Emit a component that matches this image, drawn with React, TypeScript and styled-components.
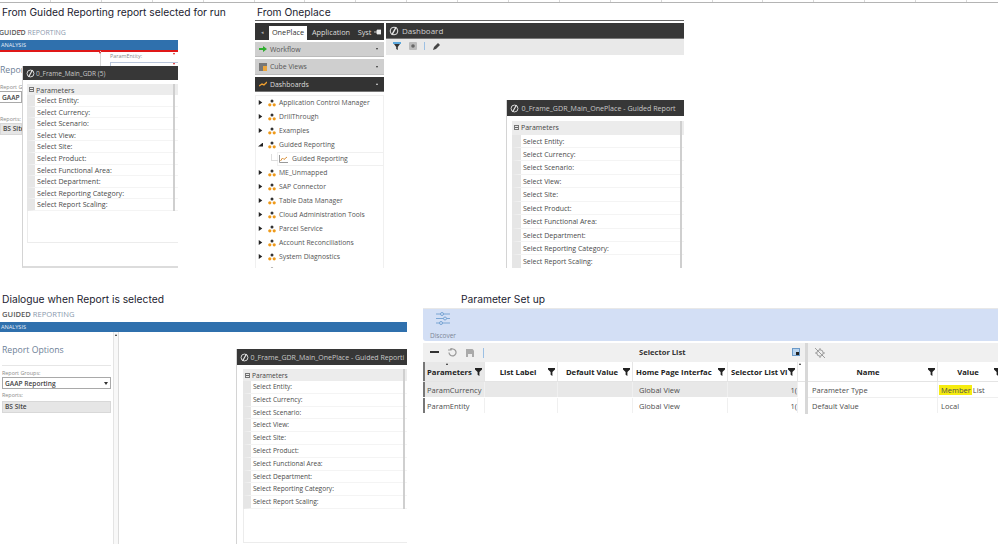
import styled, { createGlobalStyle } from 'styled-components';

const GlobalStyle = createGlobalStyle`
  html, body {
    margin: 0;
    padding: 0;
    background: #fff;
    overflow: hidden;
  }
  * { box-sizing: border-box; }
`;

const uiFont = `"Open Sans", "Noto Sans", "Liberation Sans", sans-serif`;

const Sheet = styled.div`
  position: relative;
  width: 998px;
  height: 544px;
  overflow: hidden;
  background: #fff;
  font-family: ${uiFont};
`;

const ColumnRuler = styled.div`
  display: flex;
  height: 3px;
  border-bottom: 1px solid #b4b4b4;
  padding-left: 50px;
`;

const ColumnTick = styled.div`
  width: 50.9px;
  flex: none;
  border-left: 1px solid #d8d8d8;
`;

// pasted pictures sit freely on the spreadsheet
const Pasted = styled.div<{ $x: number; $y: number; $w: number; $h: number }>`
  position: absolute;
  left: ${p => p.$x}px;
  top: ${p => p.$y}px;
  width: ${p => p.$w}px;
  height: ${p => p.$h}px;
  overflow: hidden;
`;

const Caption = styled.div<{ $x: number; $y: number }>`
  position: absolute;
  left: ${p => p.$x}px;
  top: ${p => p.$y}px;
  font-family: Inter, "Open Sans", sans-serif;
  font-size: 10.25px;
  line-height: 14px;
  color: #1c2230;
  white-space: nowrap;
`;

const Brand = styled.div<{ $h: number; $lh: number; $size: number; $x: number }>`
  height: ${p => p.$h}px;
  font-size: ${p => p.$size}px;
  line-height: ${p => p.$lh}px;
  font-weight: 600;
  color: #5a5a5a;
  white-space: nowrap;
  margin-left: ${p => p.$x}px;
  span { font-weight: 400; color: #8a99ad; margin-left: 2px; }
`;

const AnalysisBar = styled.div<{ $red?: boolean }>`
  height: ${p => (p.$red ? 12 : 10)}px;
  background: #2f70ad;
  border-bottom: ${p => (p.$red ? '2px solid #e01818' : '0')};
  color: #e6eef7;
  font-size: 5.6px;
  line-height: 10px;
  padding-left: 1px;
`;

const WindowBox = styled.div<{ $x: number; $y: number; $w: number; $h: number; $closed?: boolean }>`
  position: absolute;
  left: ${p => p.$x}px;
  top: ${p => p.$y}px;
  width: ${p => p.$w}px;
  height: ${p => p.$h}px;
  background: #fff;
  border-left: 1px solid #d4d4d4;
  border-bottom: ${p => (p.$closed ? '2px solid #dcdcdc' : '0')};
  overflow: hidden;
  display: flex;
  flex-direction: column;
`;

const WindowTitle = styled.div<{ $h: number; $size: number; $gap: number }>`
  height: ${p => p.$h}px;
  flex: none;
  background: #373737;
  color: #c8c8c8;
  display: flex;
  align-items: center;
  gap: ${p => p.$gap}px;
  padding-left: 2.5px;
  font-size: ${p => p.$size}px;
  white-space: nowrap;
`;

const GridArea = styled.div<{ $inset: number; $top: number; $h: number }>`
  margin: ${p => p.$top}px 0 0 ${p => p.$inset}px;
  height: ${p => p.$h}px;
  flex: none;
  position: relative;
  box-shadow: inset 1px -1px 0 #ececec;
`;

const GridHeader = styled.div<{ $h: number; $size: number }>`
  height: ${p => p.$h}px;
  background: #ececec;
  display: flex;
  align-items: center;
  gap: 2px;
  padding-left: 2px;
  font-size: ${p => p.$size}px;
  color: #444;
`;

const Expander = styled.span`
  width: 5px;
  height: 5px;
  border: 1px solid #777;
  background: linear-gradient(#666, #666) center / 3px 1px no-repeat;
  flex: none;
`;

const GridRow = styled.div<{ $h: number; $gutter: number; $size: number }>`
  height: ${p => p.$h}px;
  border-left: ${p => p.$gutter}px solid #e6e6e6;
  border-bottom: 1px solid #f4f4f4;
  background: #fff;
  padding-left: 2px;
  font-size: ${p => p.$size}px;
  line-height: ${p => p.$h}px;
  color: #4a4a4a;
  white-space: nowrap;
`;

const GridScroll = styled.div<{ $right: number; $h: number }>`
  position: absolute;
  top: 0;
  right: ${p => p.$right}px;
  width: 2px;
  height: ${p => p.$h}px;
  background: #cfcfcf;
`;

const LeftHeading = styled.div`
  font-size: 8.7px;
  line-height: 14px;
  color: #6e7f97;
  white-space: nowrap;
`;

const TinyLabel = styled.div`
  font-size: 5.4px;
  line-height: 8px;
  color: #8a8a8a;
  white-space: nowrap;
`;

const SelectBox = styled.div`
  height: 12px;
  flex: none;
  border: 1px solid #a9a9a9;
  display: flex;
  align-items: center;
  justify-content: space-between;
  padding: 0 2px;
  font-size: 6.6px;
  font-weight: 600;
  color: #444;
  white-space: nowrap;
  &::after { content: ''; border: 2px solid transparent; border-top: 3px solid #333; border-bottom: 0; }
`;

const ListItem = styled.div`
  height: 12px;
  flex: none;
  background: #e6e6e6;
  border: 1px solid #d8d8d8;
  font-size: 6.6px;
  font-weight: 600;
  line-height: 10px;
  padding-left: 2px;
  color: #444;
  white-space: nowrap;
`;

const OptionsLayout = styled.div`
  display: flex;
  height: 212px;
`;

const OptionsPanel = styled.div`
  width: 113px;
  flex: none;
  padding: 11px 2px 0 2px;
  display: flex;
  flex-direction: column;
`;

const OptionsGutter = styled.div`
  width: 6px;
  flex: none;
  border-left: 1px solid #e4e4e4;
  border-right: 1px solid #dcdcdc;
  background: #f8f8f8;
  position: relative;
  &::before {
    content: '';
    position: absolute;
    top: 2px;
    left: 1px;
    border: 1.5px solid transparent;
    border-bottom: 2px solid #222;
    border-top: 0;
  }
`;

const OptionsRule = styled.div`
  height: 1px;
  background: #e6e6e6;
  margin: 8px 0 3px;
`;

const OptionsSpacer = styled.div<{ $h: number }>`
  height: ${p => p.$h}px;
  flex: none;
`;

const RedTick = styled.span<{ $x: number; $y: number }>`
  position: absolute;
  left: ${p => p.$x}px;
  top: ${p => p.$y}px;
  border: 1.5px solid transparent;
  border-top: 2px solid #d81818;
  border-bottom: 0;
`;

const BehindInput = styled.div`
  position: absolute;
  left: 110px;
  top: 37px;
  width: 70px;
  height: 6px;
  border: 1px solid #b9c6dc;
`;

const BehindLabel = styled(TinyLabel)`
  position: absolute;
  left: 110px;
  top: 27px;
`;

const BehindRule = styled.div`
  position: absolute;
  left: 100px;
  top: 26px;
  width: 1px;
  height: 16px;
  background: #d8d8d8;
`;

const OverlapColumn = styled.div`
  position: absolute;
  left: 0;
  top: 38px;
  width: 22px;
  height: 80px;
  overflow: hidden;
  display: flex;
  flex-direction: column;
`;

const ClippedSelect = styled(SelectBox)`
  &::after { display: none; }
  margin-left: -1px;
  padding-left: 2px;
  overflow: hidden;
  justify-content: flex-start;
`;

const NavShell = styled.div`
  display: flex;
  gap: 2px;
  height: 245px;
`;

const NavColumn = styled.div`
  width: 129px;
  flex: none;
  display: flex;
  flex-direction: column;
  overflow: hidden;
`;

const TabBar = styled.div`
  height: 16.5px;
  background: #333;
  display: flex;
  align-items: flex-end;
  flex: none;
  font-size: 7.3px;
  color: #e0e0e0;
  white-space: nowrap;
  overflow: hidden;
`;

const TabBack = styled.div`
  width: 14px;
  height: 16px;
  flex: none;
  color: #aaa;
  font-size: 5px;
  line-height: 16px;
  text-align: center;
`;

const TabItem = styled.div<{ $active?: boolean; $w: number }>`
  width: ${p => p.$w}px;
  height: 14px;
  line-height: 13px;
  text-align: center;
  flex: none;
  background: ${p => (p.$active ? '#fff' : 'transparent')};
  color: ${p => (p.$active ? '#333' : '#dcdcdc')};
  overflow: hidden;
`;

const Accordion = styled.div<{ $dark?: boolean }>`
  height: 15.5px;
  margin-top: 2px;
  flex: none;
  background: ${p => (p.$dark ? '#333' : '#cfcfcf')};
  border-bottom: 1px solid ${p => (p.$dark ? '#777' : '#bbb')};
  color: ${p => (p.$dark ? '#ddd' : '#555')};
  display: flex;
  align-items: center;
  padding: 1px 6px 0 4px;
  font-size: 6.9px;
  gap: 3px;
`;

const AccordionLabel = styled.span`
  flex: 1;
`;

const Caret = styled.span<{ $up?: boolean; $light?: boolean }>`
  border: 1.5px solid transparent;
  ${p => {
    const c = p.$light ? '#ddd' : '#333';
    return p.$up ? `border-bottom: 2px solid ${c}; border-top: 0;` : `border-top: 2px solid ${c}; border-bottom: 0;`;
  }}
`;

const TreeBox = styled.div`
  flex: 1;
  margin-top: 2.5px;
  border: 1px solid #f0f0f0;
  border-bottom: 0;
  padding-left: 2px;
  overflow: hidden;
`;

const TreeRow = styled.div`
  height: 14px;
  display: flex;
  align-items: center;
  gap: 3px;
  font-size: 6.8px;
  color: #555;
  white-space: nowrap;
`;

const TreeChild = styled(TreeRow)`
  position: relative;
  margin-left: 19px;
  padding-left: 1px;
  gap: 4px;
  border: 1px solid #f0f0f0;
  border-right: 0;
  &::before {
    content: '';
    position: absolute;
    left: -7px;
    top: 1px;
    width: 6px;
    height: 6px;
    border-left: 1px solid #ddd;
    border-bottom: 1px solid #ddd;
  }
`;

const Arrow = styled.span<{ $open?: boolean }>`
  width: 5px;
  flex: none;
  margin-right: 2px;
  ${p =>
    p.$open
      ? `height: 4px; background: #222; clip-path: polygon(100% 0, 100% 100%, 0 100%);`
      : `height: 5px; background: #222; clip-path: polygon(15% 0, 85% 50%, 15% 100%);`}
`;

const DashColumn = styled.div`
  flex: 1;
  display: flex;
  flex-direction: column;
`;

const DashTitle = styled.div`
  height: 16px;
  background: #373737;
  border-bottom: 1px solid #777;
  color: #cfcfcf;
  font-size: 8px;
  display: flex;
  align-items: center;
  gap: 3px;
  padding-left: 3px;
`;

const DashTools = styled.div`
  height: 16px;
  background: #e9e9e9;
  display: flex;
  align-items: center;
  gap: 7.5px;
  padding: 0 0 2px 7px;
`;

const ToolDivider = styled.span<{ $h: number }>`
  width: 1px;
  height: ${p => p.$h}px;
  background: #9cc0e4;
`;

const TopRule = styled.div`
  height: 1px;
  background: #666;
  margin-bottom: 2px;
`;

const Ribbon = styled.div`
  height: 33px;
  background: #d3dff5;
  border-top: 1px solid #e8e8e8;
  border-bottom-left-radius: 3px;
  display: flex;
  padding: 3px 0 0 7px;
`;

const RibbonButton = styled.div`
  width: 26px;
  display: flex;
  flex-direction: column;
  align-items: center;
  gap: 7px;
  font-size: 6.5px;
  line-height: 8px;
  color: #7d8696;
`;

const Splitter = styled.div`
  display: flex;
  height: 71px;
  margin-top: 2px;
`;

const GridPane = styled.div`
  width: 382px;
  flex: none;
  display: flex;
  flex-direction: column;
`;

const SplitBar = styled.div`
  width: 3px;
  flex: none;
  background: #d8d8d8;
`;

const DetailPane = styled.div`
  flex: 1;
  min-width: 0;
  display: flex;
  flex-direction: column;
`;

const PaneTools = styled.div<{ $gap: number }>`
  height: 19px;
  flex: none;
  background: #f0f0f0;
  display: flex;
  align-items: center;
  padding: 0 4px 0 7px;
  gap: ${p => p.$gap}px;
  position: relative;
`;

const PaneTitle = styled.div`
  position: absolute;
  left: 216px;
  top: 0;
  font-size: 7.6px;
  line-height: 19px;
  font-weight: 700;
  color: #333;
`;

const PopOut = styled.span`
  position: absolute;
  right: 5px;
  top: 5px;
  width: 8px;
  height: 8px;
  background: #b8d3ee;
  border: 1px solid #6b9ac8;
  &::after {
    content: '';
    position: absolute;
    right: 0;
    bottom: 0;
    width: 3px;
    height: 3px;
    background: #222;
  }
`;

const TableRow = styled.div<{ $shade?: boolean; $header?: boolean; $lined?: boolean }>`
  display: flex;
  height: ${p => (p.$header ? 20 : 16)}px;
  flex: none;
  position: relative;
  background: ${p => (p.$shade ? 'linear-gradient(#e8e8e8, #e8e8e8) 0 0 / 375px 100% no-repeat' : '#fff')};
  border-bottom: 1px solid ${p => (p.$header ? '#e4e4e4' : p.$lined ? '#efefef' : 'transparent')};
`;

const Cell = styled.div<{ $w: number; $header?: boolean; $pad?: number; $leading?: boolean; $end?: boolean }>`
  width: ${p => p.$w}px;
  flex: none;
  display: flex;
  align-items: center;
  justify-content: ${p => (p.$end ? 'flex-end' : 'flex-start')};
  position: relative;
  overflow: hidden;
  white-space: nowrap;
  padding-left: ${p => p.$pad ?? 0}px;
  padding-right: ${p => (p.$header ? 2 : 0)}px;
  font-size: ${p => (p.$header ? 7.7 : 7.5)}px;
  font-weight: ${p => (p.$header ? 700 : 400)};
  color: ${p => (p.$header ? '#222' : '#4d4d4d')};
  border-right: 1px solid ${p => (p.$header ? '#e6e6e6' : '#f0f0f0')};
  ${p => p.$leading && `border-left: 2px solid #777; background: ${p.$header ? '#e8e8e8' : 'transparent'};`}
`;

const HeadText = styled.span<{ $center?: boolean }>`
  flex: 1;
  overflow: hidden;
  text-align: ${p => (p.$center ? 'center' : 'left')};
`;

const SortMark = styled.span<{ $x: number }>`
  position: absolute;
  left: ${p => p.$x}px;
  top: 1px;
  border: 1.5px solid transparent;
  border-bottom: 2px solid #222;
  border-top: 0;
`;

const Marked = styled.span`
  background: linear-gradient(#f6ec10, #f6ec10) 0 50% / 33px 10px no-repeat;
  margin-left: -2px;
  padding-left: 2px;
  line-height: 12px;
`;

const SmallFunnel = () => (
  <svg width="7" height="8" viewBox="0 0 7 8" style={{ flex: 'none' }}>
    <path d="M0 0h7v1.4L4.4 4v4L2.6 6.8V4L0 1.4z" fill="#222" />
  </svg>
);

const OneLogo = ({ size = 9 }: { size?: number }) => (
  <svg width={size} height={size} viewBox="0 0 12 12" style={{ flex: 'none' }}>
    <circle cx="6" cy="6" r="4.6" fill="none" stroke="#e8e8e8" strokeWidth="1.2" />
    <path d="M8.6 1.4 3.4 10.6" stroke="#e8e8e8" strokeWidth="1.6" />
  </svg>
);

const CubeDots = () => (
  <svg width="8" height="8" viewBox="0 0 8 8" style={{ flex: 'none' }}>
    <circle cx="4" cy="2" r="1.5" fill="#333" />
    <circle cx="1.8" cy="5.8" r="1.6" fill="#ef9a1a" />
    <circle cx="6.2" cy="5.8" r="1.6" fill="#ef9a1a" />
  </svg>
);

const parameterNames = [
  'Select Entity:',
  'Select Currency:',
  'Select Scenario:',
  'Select View:',
  'Select Site:',
  'Select Product:',
  'Select Functional Area:',
  'Select Department:',
  'Select Reporting Category:',
  'Select Report Scaling:',
];

const ParameterGrid = ({ rowH, headH, inset, top, gutter, scroll, size, h }: {
  rowH: number; headH: number; inset: number; top: number; gutter: number; scroll: number; size: number; h: number;
}) => (
  <GridArea $inset={inset} $top={top} $h={h}>
    <GridHeader $h={headH} $size={size}><Expander />Parameters</GridHeader>
    {parameterNames.map(name => (
      <GridRow key={name} $h={rowH} $gutter={gutter} $size={size}>{name}</GridRow>
    ))}
    <GridScroll $right={scroll} $h={headH + rowH * 10} />
  </GridArea>
);

const treeItems = [
  'Application Control Manager',
  'DrillThrough',
  'Examples',
  'Guided Reporting',
  '@Guided Reporting',
  'ME_Unmapped',
  'SAP Connector',
  'Table Data Manager',
  'Cloud Administration Tools',
  'Parcel Service',
  'Account Reconciliations',
  'System Diagnostics',
  'Transaction Matching',
];

const gridColumns = [
  { name: 'Parameters', w: 62, leading: true },
  { name: 'List Label', w: 73, center: true },
  { name: 'Default Value', w: 75, center: true },
  { name: 'Home Page Interfac', w: 95 },
  { name: 'Selector List Vi', w: 70 },
];

const App = () => (
  <Sheet>
    <GlobalStyle />
    <ColumnRuler>
      {Array.from({ length: 19 }, (_, i) => <ColumnTick key={i} />)}
    </ColumnRuler>

    <Caption $x={2} $y={5}>From Guided Reporting report selected for run</Caption>
    <Pasted $x={0} $y={25} $w={178} $h={243}>
      <Brand $h={15} $lh={16} $size={7} $x={-1}>GUIDED<span>REPORTING</span></Brand>
      <AnalysisBar $red>ANALYSIS</AnalysisBar>
      <BehindRule />
      <BehindLabel>ParamEntity:</BehindLabel>
      <BehindInput />
      <RedTick $x={19} $y={5} />
      <RedTick $x={99} $y={27} />
      <RedTick $x={173} $y={28} />
      <RedTick $x={173} $y={38} />
      <OverlapColumn>
        <LeftHeading>Report</LeftHeading>
        <OptionsSpacer $h={6} />
        <TinyLabel>Report Gr</TinyLabel>
        <ClippedSelect>GAAP R</ClippedSelect>
        <OptionsSpacer $h={12} />
        <TinyLabel>Reports:</TinyLabel>
        <ListItem>BS Site</ListItem>
      </OverlapColumn>
      <WindowBox $x={22} $y={41} $w={156} $h={202} $closed>
        <WindowTitle $h={14} $size={6.5} $gap={1.5}><OneLogo />0_Frame_Main_GDR (5)</WindowTitle>
        <ParameterGrid rowH={11.6} headH={11} inset={4} top={4} gutter={8} scroll={3} size={7.1} h={159} />
      </WindowBox>
    </Pasted>

    <Caption $x={257} $y={5}>From Oneplace</Caption>
    <Pasted $x={255} $y={20} $w={429} $h={248}>
      <TopRule />
      <NavShell>
        <NavColumn>
          <TabBar>
            <TabBack>◂</TabBack>
            <TabItem $active $w={38}>OnePlace</TabItem>
            <TabItem $w={48}>Application</TabItem>
            <TabItem $w={19}>Syst</TabItem>
            <svg width="7" height="6" viewBox="0 0 7 6" style={{ marginBottom: 5, flex: 'none' }}>
              <path d="M0 3h3M3 1h4v4H3z" stroke="#eee" fill="#eee" strokeWidth=".8" />
            </svg>
          </TabBar>
          <Accordion>
            <svg width="8" height="6" viewBox="0 0 8 6"><path d="M0 2h4V0l4 3-4 3V4H0z" fill="#2fae2f" /></svg>
            <AccordionLabel>Workflow</AccordionLabel>
            <Caret />
          </Accordion>
          <Accordion>
            <svg width="8" height="8" viewBox="0 0 8 8">
              <rect width="8" height="8" fill="#777" />
              <rect x="4" y="3" width="4" height="5" fill="#eba53c" />
            </svg>
            <AccordionLabel>Cube Views</AccordionLabel>
            <Caret />
          </Accordion>
          <Accordion $dark>
            <svg width="8" height="6" viewBox="0 0 8 6"><path d="M0 5l3-2 2 1 3-3" stroke="#f0a030" strokeWidth="1.4" fill="none" /></svg>
            <AccordionLabel>Dashboards</AccordionLabel>
            <Caret $up $light />
          </Accordion>
          <TreeBox>
            {treeItems.map(item =>
              item.startsWith('@') ? (
                <TreeChild key={item}>
                  <svg width="9" height="8" viewBox="0 0 9 8" style={{ flex: 'none' }}>
                    <path d="M.5 0v7.5H9" stroke="#999" fill="none" />
                    <path d="M1.5 6l2-3 1.5 1.5L8 2" stroke="#d9903a" fill="none" />
                  </svg>
                  {item.slice(1)}
                </TreeChild>
              ) : (
                <TreeRow key={item}>
                  <Arrow $open={item === 'Guided Reporting'} />
                  <CubeDots />
                  {item}
                </TreeRow>
              ),
            )}
          </TreeBox>
        </NavColumn>
        <DashColumn>
          <DashTitle><OneLogo size={10} />Dashboard</DashTitle>
          <DashTools>
            <svg width="8" height="8" viewBox="0 0 8 8">
              <path d="M0 0h8v2H0z" fill="#5aa7dc" />
              <path d="M1 2h6L4.8 5v3L3.2 7V5z" fill="#333" />
            </svg>
            <svg width="8" height="8" viewBox="0 0 8 8">
              <rect width="8" height="8" rx="1" fill="#bbb" />
              <circle cx="4" cy="4" r="1.8" fill="#666" />
            </svg>
            <ToolDivider $h={8} />
            <svg width="8" height="8" viewBox="0 0 8 8"><path d="M0 8l1-3 4-4 2 2-4 4z" fill="#444" /></svg>
          </DashTools>
        </DashColumn>
      </NavShell>
      <WindowBox $x={251} $y={80} $w={178} $h={168}>
        <WindowTitle $h={16} $size={7.1} $gap={3}><OneLogo />0_Frame_GDR_Main_OnePlace - Guided Report</WindowTitle>
        <ParameterGrid rowH={13.45} headH={13.5} inset={5} top={5} gutter={9} scroll={2} size={7} h={150} />
      </WindowBox>
    </Pasted>

    <Caption $x={2} $y={292}>Dialogue when Report is selected</Caption>
    <Pasted $x={0} $y={308} $w={407} $h={236}>
      <Brand $h={14} $lh={13} $size={7.6} $x={2}>GUIDED<span>REPORTING</span></Brand>
      <AnalysisBar>ANALYSIS</AnalysisBar>
      <OptionsLayout>
        <OptionsPanel>
          <LeftHeading>Report Options</LeftHeading>
          <OptionsRule />
          <TinyLabel>Report Groups:</TinyLabel>
          <SelectBox>GAAP Reporting</SelectBox>
          <OptionsSpacer $h={2} />
          <TinyLabel>Reports:</TinyLabel>
          <OptionsSpacer $h={2} />
          <ListItem>BS Site</ListItem>
        </OptionsPanel>
        <OptionsGutter />
      </OptionsLayout>
      <WindowBox $x={236} $y={41} $w={171} $h={195}>
        <WindowTitle $h={16} $size={7} $gap={2}><OneLogo />0_Frame_GDR_Main_OnePlace - Guided Reporti</WindowTitle>
        <ParameterGrid rowH={12.8} headH={12} inset={6} top={4} gutter={8} scroll={2} size={6.6} h={174} />
      </WindowBox>
    </Pasted>

    <Caption $x={461} $y={292}>Parameter Set up</Caption>
    <Pasted $x={423} $y={308} $w={575} $h={107}>
      <Ribbon>
        <RibbonButton>
          <svg width="14" height="13" viewBox="0 0 14 13" fill="none" stroke="#6f9fd0" strokeWidth=".9">
            <path d="M0 2h14M0 6.5h14M0 11h14" />
            <circle cx="6" cy="2" r="1.5" fill="#d3dff5" />
            <circle cx="9" cy="6.5" r="1.5" fill="#d3dff5" />
            <circle cx="5" cy="11" r="1.5" fill="#d3dff5" />
          </svg>
          Discover
        </RibbonButton>
      </Ribbon>
      <Splitter>
        <GridPane>
          <PaneTools $gap={9}>
            <svg width="9" height="3" viewBox="0 0 9 3"><rect width="9" height="2" fill="#333" /></svg>
            <svg width="9" height="9" viewBox="0 0 9 9" fill="none" stroke="#999" strokeWidth="1.2"><path d="M2 2a3.5 3.5 0 1 1-1 2.5M0 2h3V0" /></svg>
            <svg width="8" height="8" viewBox="0 0 8 8"><path d="M0 0h6.5L8 1.5V8H0z" fill="#aaa" /><rect x="2" y="5" width="4" height="3" fill="#eee" /></svg>
            <ToolDivider $h={10} />
            <PaneTitle>Selector List</PaneTitle>
            <PopOut />
          </PaneTools>
          <TableRow $header>
            {gridColumns.map(col => (
              <Cell key={col.name} $w={col.w} $header $pad={col.leading ? 2 : 3} $leading={col.leading}>
                <HeadText $center={col.center}>{col.name}</HeadText>
                <SmallFunnel />
              </Cell>
            ))}
            <SortMark $x={23} />
            <SortMark $x={376} />
          </TableRow>
          <TableRow $shade>
            <Cell $w={62} $pad={2} $leading>ParamCurrency</Cell>
            <Cell $w={73} />
            <Cell $w={75} />
            <Cell $w={95} $pad={6}>Global View</Cell>
            <Cell $w={70} $end>1(</Cell>
          </TableRow>
          <TableRow>
            <Cell $w={62} $pad={2} $leading>ParamEntity</Cell>
            <Cell $w={73} />
            <Cell $w={75} />
            <Cell $w={95} $pad={6}>Global View</Cell>
            <Cell $w={70} $end>1(</Cell>
          </TableRow>
        </GridPane>
        <SplitBar />
        <DetailPane>
          <PaneTools $gap={4}>
            <svg width="10" height="10" viewBox="0 0 10 10" fill="none" stroke="#888" strokeWidth=".8">
              <circle cx="5" cy="5" r="3.2" />
              <path d="M0 0l10 10M5 0v2M5 8v2M0 5h2M8 5h2" />
            </svg>
          </PaneTools>
          <TableRow $header>
            <Cell $w={130} $header><HeadText $center>Name</HeadText><SmallFunnel /></Cell>
            <Cell $w={66} $header $pad={4}><HeadText $center>Value</HeadText><SmallFunnel /></Cell>
          </TableRow>
          <TableRow $lined>
            <Cell $w={130} $pad={4}>Parameter Type</Cell>
            <Cell $w={66} $pad={3}><Marked>Member List</Marked></Cell>
          </TableRow>
          <TableRow>
            <Cell $w={130} $pad={4}>Default Value</Cell>
            <Cell $w={66} $pad={3}>Local</Cell>
          </TableRow>
        </DetailPane>
      </Splitter>
    </Pasted>
  </Sheet>
);

export default App;
